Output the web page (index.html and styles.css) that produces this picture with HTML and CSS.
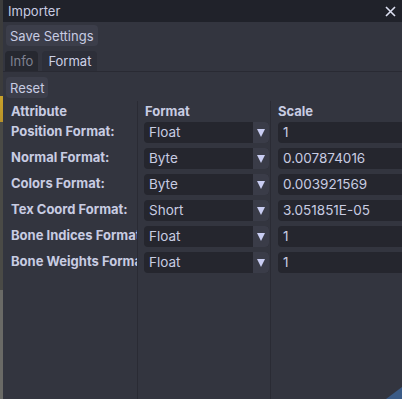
FILE: index.html
```html
<!DOCTYPE html>
<html lang="en">
<head>
    <meta charset="UTF-8">
    <meta name="viewport" content="width=device-width, initial-scale=1.0">
    <title>Importer</title>
    <link rel="stylesheet" href="styles.css">
</head>
<body>

<div class="scene-edge"></div>

<div class="window">
    <div class="titlebar">
        <span class="title">Importer</span>
        <svg class="close-icon" width="11" height="11" viewBox="0 0 11 11">
            <path d="M1 1 L10 10 M10 1 L1 10" stroke="#dde0f2" stroke-width="1.6" fill="none"/>
        </svg>
    </div>

    <div class="content">
        <div class="row">
            <button class="btn">Save Settings</button>
        </div>

        <div class="tab-bar">
            <div class="tab">Info</div>
            <div class="tab active">Format</div>
        </div>

        <div class="row">
            <button class="btn">Reset</button>
        </div>

        <div class="table">
            <div class="cell head">Attribute</div>
            <div class="cell head">Format</div>
            <div class="cell head">Scale</div>

            <div class="cell label">Position Format:</div>
            <div class="cell"><div class="combo"><span class="combo-value">Float</span><span class="combo-arrow"></span></div></div>
            <div class="cell"><div class="input">1</div></div>

            <div class="cell label">Normal Format:</div>
            <div class="cell"><div class="combo"><span class="combo-value">Byte</span><span class="combo-arrow"></span></div></div>
            <div class="cell"><div class="input">0.007874016</div></div>

            <div class="cell label">Colors Format:</div>
            <div class="cell"><div class="combo"><span class="combo-value">Byte</span><span class="combo-arrow"></span></div></div>
            <div class="cell"><div class="input">0.003921569</div></div>

            <div class="cell label">Tex Coord Format:</div>
            <div class="cell"><div class="combo"><span class="combo-value">Short</span><span class="combo-arrow"></span></div></div>
            <div class="cell"><div class="input">3.051851E-05</div></div>

            <div class="cell label">Bone Indices Format:</div>
            <div class="cell"><div class="combo"><span class="combo-value">Float</span><span class="combo-arrow"></span></div></div>
            <div class="cell"><div class="input">1</div></div>

            <div class="cell label">Bone Weights Format:</div>
            <div class="cell"><div class="combo"><span class="combo-value">Float</span><span class="combo-arrow"></span></div></div>
            <div class="cell"><div class="input">1</div></div>

            <div class="cell filler"></div>
            <div class="cell filler"></div>
            <div class="cell filler"></div>
        </div>
    </div>

    <div class="resize-grip"></div>
</div>

</body>
</html>
```

FILE: styles.css
```css
/* ventana estilo imgui */
body {
    margin: 0;
    width: 402px;
    height: 399px;
    overflow: hidden;
    display: flex;
    font-family: Inter, "Noto Sans", sans-serif;
    font-size: 13px;
    color: #c8cce2;
    background-color: #3a3a3a;
}

.scene-edge {
    width: 3px;
    flex-shrink: 0;
    background: linear-gradient(to bottom,
        #3c3c3c 0, #3c3c3c 96px,
        #c9a22a 96px, #b8922a 122px,
        #4a4a46 122px, #4a4a46 290px,
        #6a6a66 290px, #6a6a66 399px);
}

.window {
    position: relative;
    flex: 1;
    display: flex;
    flex-direction: column;
    background-color: #33353f;
    overflow: hidden;
}

.titlebar {
    height: 22px;
    flex-shrink: 0;
    display: flex;
    align-items: center;
    justify-content: space-between;
    padding: 0 6px 0 5px;
    background-color: #20222a;
}

.title {
    line-height: 22px;
}

.close-icon {
    display: block;
}

.content {
    flex: 1;
    display: flex;
    flex-direction: column;
    padding-top: 3px;
}

.row {
    display: flex;
    padding-left: 3px;
}

.btn {
    height: 21px;
    padding: 0 4px;
    font-family: inherit;
    font-size: 13px;
    color: #c8cce2;
    background-color: #3c3e4a;
    border: none;
    border-radius: 4px;
}

.tab-bar {
    display: flex;
    gap: 4px;
    margin-top: 5px;
    padding-left: 2px;
    height: 20px;
    border-bottom: 1px solid #292a33;
    margin-bottom: 5px;
}

.tab {
    padding: 0 5px;
    line-height: 20px;
    border-radius: 4px 4px 0 0;
    background-color: #262830;
    color: #7f8290;
}

.tab.active {
    background-color: #2d2f39;
    color: #cdd1e6;
    padding: 0 6px;
}

.table {
    flex: 1;
    display: grid;
    grid-template-columns: 133px 133px 1fr;
    grid-template-rows: 21px;
    grid-auto-rows: 26px;
    margin-left: 1px;
    margin-top: 3px;
    overflow: hidden;
}

.table .filler {
    height: 400px;
}

.cell {
    padding-left: 7px;
    overflow: hidden;
    white-space: nowrap;
    border-left: 1px solid #2a2b34;
}

.cell:nth-child(3n+1) {
    border-left: none;
}

.cell.head {
    font-weight: 700;
    line-height: 18px;
    padding-top: 1px;
}

.cell.label {
    font-weight: 700;
    line-height: 18px;
    padding-top: 0;
}

.combo {
    display: flex;
    height: 21px;
    margin-left: -1px;
    width: 125px;
    border-radius: 4px;
    background-color: #25262e;
    overflow: hidden;
}

.combo-value {
    flex: 1;
    padding-left: 5px;
    line-height: 21px;
    font-size: 13.5px;
}

.combo-arrow {
    width: 16px;
    background-color: #3a3c48;
    position: relative;
}

.combo-arrow::after {
    content: "";
    position: absolute;
    left: 4px;
    top: 7px;
    border-left: 4px solid transparent;
    border-right: 4px solid transparent;
    border-top: 8px solid #c9cdf2;
}

.input {
    height: 21px;
    width: 140px;
    padding-left: 5px;
    line-height: 21px;
    font-size: 13.5px;
    border-radius: 4px;
    background-color: #25262e;
}

.resize-grip {
    position: absolute;
    right: 0;
    bottom: 0;
    width: 0;
    height: 0;
    border-left: 16px solid transparent;
    border-bottom: 12px solid #3b5b86;
}
```
